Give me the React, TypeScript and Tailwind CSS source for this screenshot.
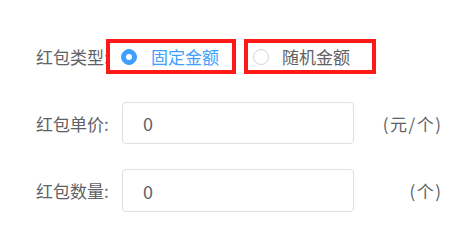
import React, { useState } from 'react';

const font = { fontFamily: '"Noto Sans CJK SC", "Noto Sans", sans-serif' };

export default function App() {
  const [type, setType] = useState<'fixed' | 'random'>('fixed');
  const [price, setPrice] = useState('0');
  const [count, setCount] = useState('0');

  const dot = (on: boolean) => (
    <span
      className={`shrink-0 w-[16px] h-[16px] rounded-full flex items-center justify-center ${
        on ? 'bg-[#409eff] border border-[#409eff]' : 'border border-[#cfd3da] bg-white'
      }`}
    >
      {on && <span className="w-[6px] h-[6px] rounded-full bg-white" />}
    </span>
  );

  return (
    <div className="w-[473px] h-[250px] bg-white text-[#606266] text-[17px]" style={font}>
      <div className="flex flex-col pl-[36px] pt-[39px]">
        {/* 红包类型 */}
        <div className="flex items-center h-[35px]">
          <div className="w-[86px] shrink-0 leading-none">红包类型:</div>
          <div className="flex items-center gap-[8px] -ml-[16px] relative z-10">
            <button
              className="flex items-center w-[130px] h-[35px] border-[4px] border-[#ff1a1a] pl-[11px] bg-white"
              onClick={() => setType('fixed')}
            >
              {dot(type === 'fixed')}
              <span className={`ml-[14px] leading-none ${type === 'fixed' ? 'text-[#409eff]' : 'text-[#606266]'}`}>
                固定金额
              </span>
            </button>
            <button
              className="flex items-center w-[132px] h-[35px] border-[4px] border-[#ff1a1a] pl-[5px] bg-white"
              onClick={() => setType('random')}
            >
              {dot(type === 'random')}
              <span className={`ml-[13px] leading-none ${type === 'random' ? 'text-[#409eff]' : 'text-[#606266]'}`}>
                随机金额
              </span>
            </button>
          </div>
        </div>

        {/* 红包单价 */}
        <div className="flex items-center mt-[28px] h-[42px]">
          <div className="w-[86px] shrink-0 leading-none">红包单价:</div>
          <input
            value={price}
            onChange={(e) => setPrice(e.target.value)}
            className="w-[232px] h-[42px] border border-[#dcdfe6] rounded-[4px] pl-[20px] pr-[15px] outline-none text-[18px] text-[#606266]"
          />
          <div className="w-[88.5px] text-right leading-none tracking-[1.5px]">(元/个)</div>
        </div>

        {/* 红包数量 */}
        <div className="flex items-center mt-[25px] h-[43px]">
          <div className="w-[86px] shrink-0 leading-none">红包数量:</div>
          <input
            value={count}
            onChange={(e) => setCount(e.target.value)}
            className="w-[232px] h-[43px] border border-[#dcdfe6] rounded-[4px] pl-[20px] pr-[15px] outline-none text-[18px] text-[#606266]"
          />
          <div className="w-[88.5px] text-right leading-none tracking-[1.5px]">(个)</div>
        </div>
      </div>
    </div>
  );
}
